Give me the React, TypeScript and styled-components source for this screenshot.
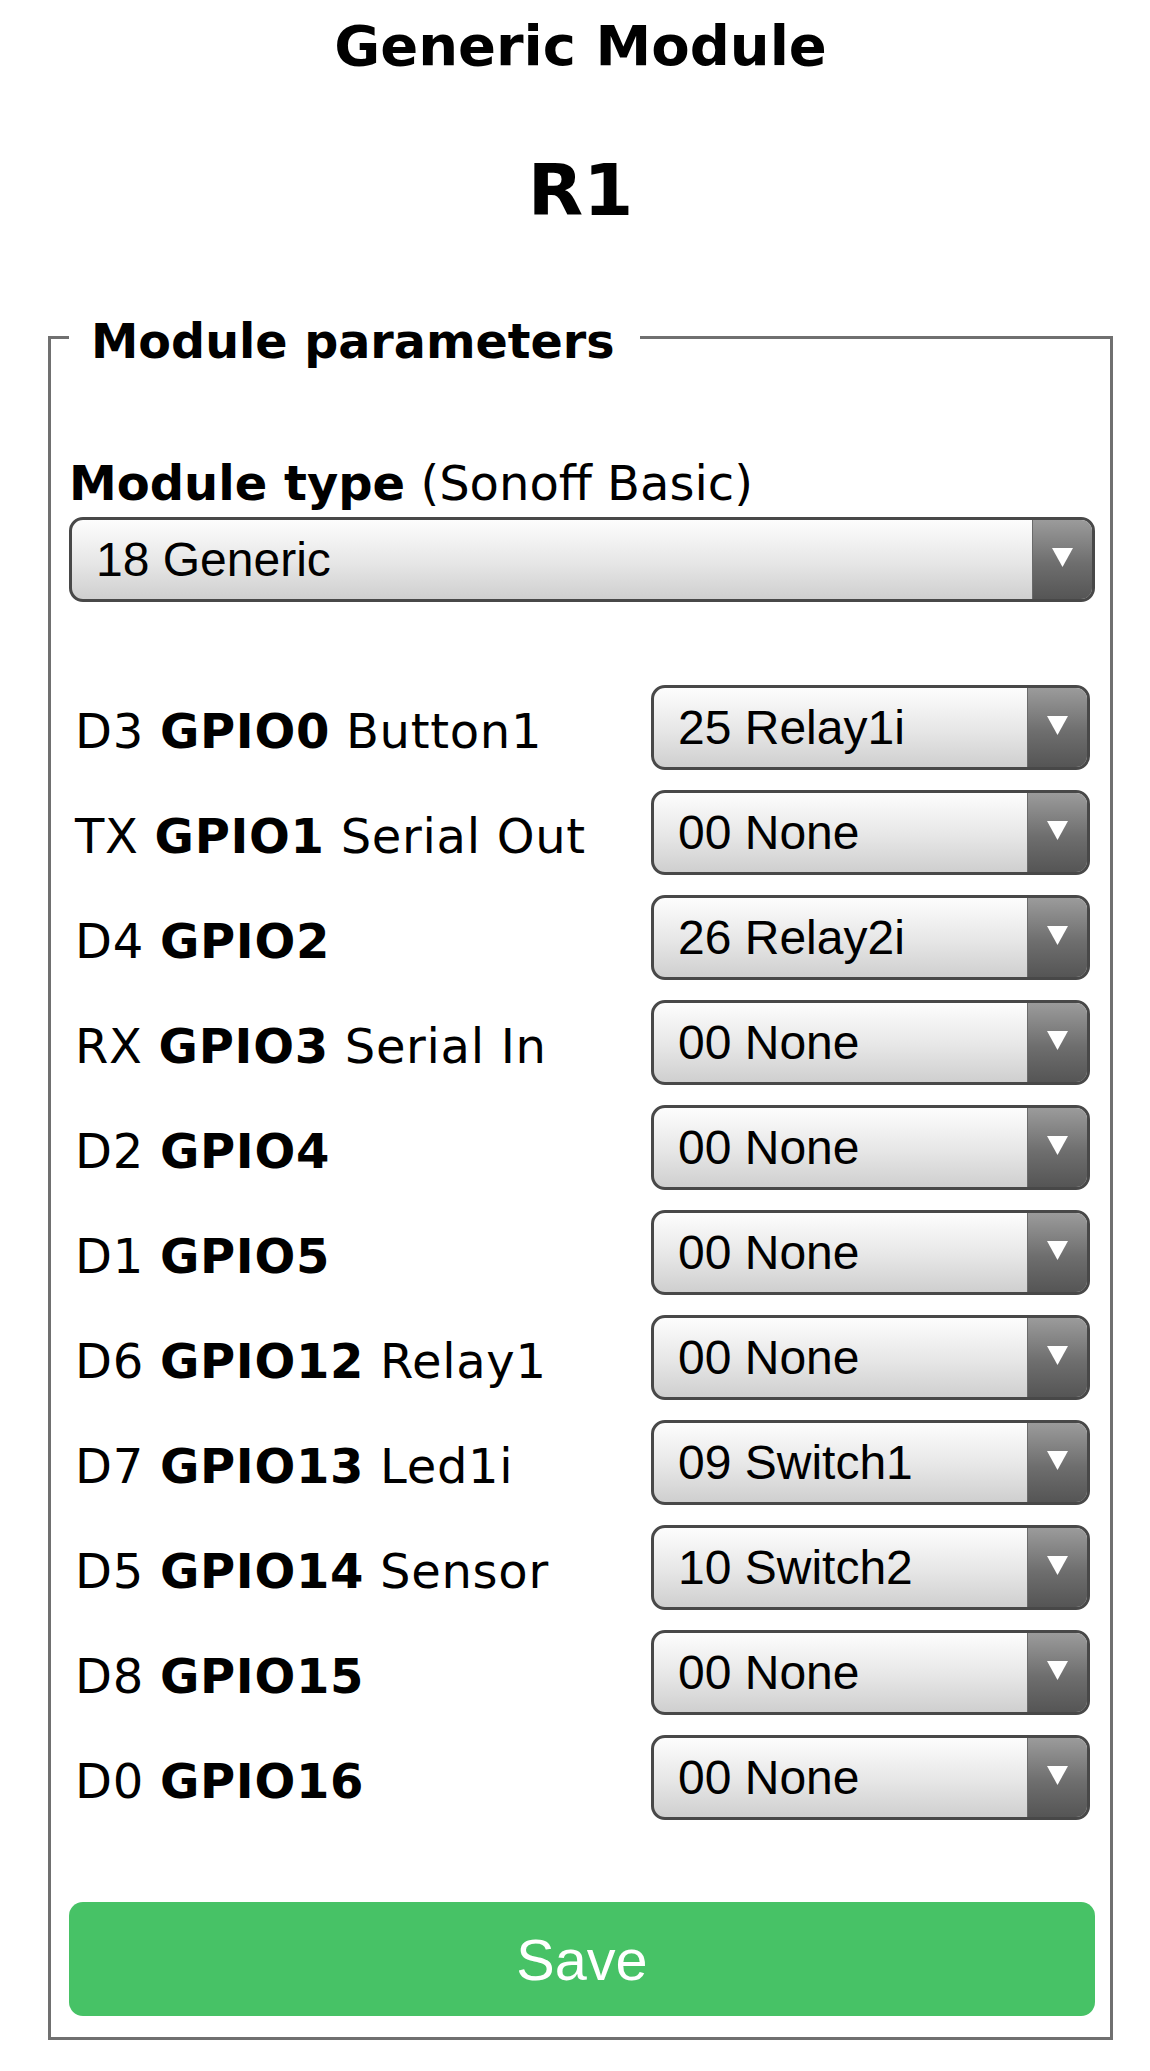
import React from 'react';
import styled, { createGlobalStyle } from 'styled-components';

const GlobalStyle = createGlobalStyle`
  html, body {
    margin: 0;
    padding: 0;
    background: #fff;
  }
  body {
    font-family: "DejaVu Sans", Verdana, sans-serif;
    color: #000;
  }
`;

const Page = styled.div`
  width: 1065px;
  margin-left: 48px;
  padding-top: 13px;
`;

const Title = styled.h3`
  margin: 0;
  font-size: 56px;
  line-height: 65px;
  font-weight: bold;
  text-align: center;
`;

const DeviceName = styled.h2`
  margin: 70px 0 0;
  font-size: 72px;
  line-height: 84px;
  font-weight: bold;
  text-align: center;
`;

const Fieldset = styled.fieldset`
  margin: 72px 0 0;
  padding: 0 15px 21px 18px;
  border: 3px solid #707070;
  box-sizing: border-box;
  width: 100%;
  min-width: 0;
`;

const Legend = styled.legend`
  padding: 10px 25px 0 22px;
  font-size: 47.6px;
  line-height: 56px;
  font-weight: bold;
`;

const ModuleType = styled.div`
  margin-top: 85px;
`;

const FieldLabel = styled.div`
  font-size: 48px;
  line-height: 56px;
  margin-bottom: 6px;
  white-space: nowrap;
`;

const GpioTable = styled.div`
  margin-top: 83px;
  display: grid;
  grid-template-columns: 1fr 439px;
  row-gap: 20px;
  align-items: center;
  padding: 0 5px 0 6px;
`;

const GpioLabel = styled.div`
  padding-top: 6px;
  font-size: 48px;
  line-height: 56px;
  letter-spacing: 0.7px;
  white-space: nowrap;
`;

const SelectFrame = styled.div`
  display: flex;
  height: 85px;
  box-sizing: border-box;
  border: 3px solid #484848;
  border-radius: 14px;
  overflow: hidden;
  background: linear-gradient(#fdfdfd, #e6e6e6 55%, #cfcfcf);
`;

const NativeSelect = styled.select`
  appearance: none;
  -webkit-appearance: none;
  flex: 1;
  min-width: 0;
  height: 100%;
  margin: 0;
  padding: 0 0 0 24px;
  border: 0;
  outline: none;
  background: transparent;
  color: #000;
  font-family: "Liberation Sans", Arial, sans-serif;
  font-size: 48px;
`;

const ArrowBox = styled.div`
  width: 59px;
  flex: none;
  display: flex;
  align-items: center;
  justify-content: center;
  border-left: 1px solid #6a6a6a;
  background: linear-gradient(#9b9b9b, #6e6e6e 55%, #555);

  svg {
    margin-bottom: 5px;
  }
`;

const SaveButton = styled.button`
  display: block;
  width: 100%;
  height: 114px;
  margin-top: 82px;
  border: 0;
  border-radius: 14px;
  background: #47c266;
  color: #fff;
  font-family: "Liberation Sans", Arial, sans-serif;
  font-size: 57.6px;
  line-height: 114px;
  cursor: pointer;
`;

const gpioOptions = ['00 None', '09 Switch1', '10 Switch2', '17 Led1', '21 Relay1', '22 Relay2', '25 Relay1i', '26 Relay2i'];

const pins = [
  { pin: 'D3', gpio: 'GPIO0', note: 'Button1', value: '25 Relay1i' },
  { pin: 'TX', gpio: 'GPIO1', note: 'Serial Out', value: '00 None' },
  { pin: 'D4', gpio: 'GPIO2', note: '', value: '26 Relay2i' },
  { pin: 'RX', gpio: 'GPIO3', note: 'Serial In', value: '00 None' },
  { pin: 'D2', gpio: 'GPIO4', note: '', value: '00 None' },
  { pin: 'D1', gpio: 'GPIO5', note: '', value: '00 None' },
  { pin: 'D6', gpio: 'GPIO12', note: 'Relay1', value: '00 None' },
  { pin: 'D7', gpio: 'GPIO13', note: 'Led1i', value: '09 Switch1' },
  { pin: 'D5', gpio: 'GPIO14', note: 'Sensor', value: '10 Switch2' },
  { pin: 'D8', gpio: 'GPIO15', note: '', value: '00 None' },
  { pin: 'D0', gpio: 'GPIO16', note: '', value: '00 None' },
];

const Arrow = () => (
  <svg width="21" height="19" viewBox="0 0 21 19">
    <path d="M0 0 H21 L10.5 19 Z" fill="#fff" />
  </svg>
);

const Dropdown = ({ options, value }: { options: string[]; value: string }) => (
  <SelectFrame>
    <NativeSelect defaultValue={value}>
      {options.map((o) => (
        <option key={o} value={o}>{o}</option>
      ))}
    </NativeSelect>
    <ArrowBox>
      <Arrow />
    </ArrowBox>
  </SelectFrame>
);

const App = () => {
  return (
    <>
      <GlobalStyle />
      <Page>
        <Title>Generic Module</Title>
        <DeviceName>R1</DeviceName>
        <Fieldset>
          <Legend>Module parameters</Legend>
          <ModuleType>
            <FieldLabel>
              <b>Module type</b> (Sonoff Basic)
            </FieldLabel>
            <Dropdown options={['01 Sonoff Basic', '18 Generic']} value="18 Generic" />
          </ModuleType>
          <GpioTable>
            {pins.map((p) => (
              <React.Fragment key={p.gpio}>
                <GpioLabel>
                  {p.pin} <b>{p.gpio}</b>{p.note ? ` ${p.note}` : ''}
                </GpioLabel>
                <Dropdown options={gpioOptions} value={p.value} />
              </React.Fragment>
            ))}
          </GpioTable>
          <SaveButton type="button">Save</SaveButton>
        </Fieldset>
      </Page>
    </>
  );
};

export default App;
